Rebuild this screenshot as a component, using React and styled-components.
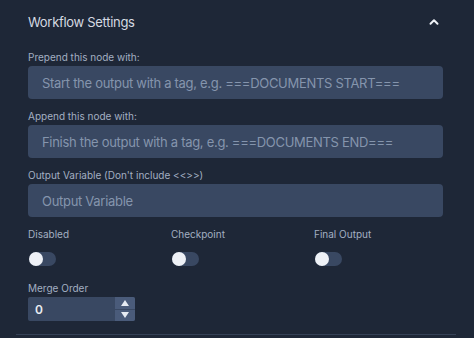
import styled, { createGlobalStyle } from "styled-components";

const GlobalStyle = createGlobalStyle`
  html, body {
    margin: 0;
    padding: 0;
    background: #1e2737;
  }
  * { box-sizing: border-box; }
`;

// 外框
const Panel = styled.div`
  width: 474px;
  height: 338px;
  overflow: hidden;
  background: #1e2737;
  font-family: Inter, "Noto Sans", sans-serif;
  padding: 12px 31px 0 28px;
  position: relative;
`;

const Header = styled.div`
  display: flex;
  align-items: center;
  justify-content: space-between;
  height: 20px;
  margin-bottom: 19px;
`;

const Title = styled.h2`
  margin: 0;
  font-size: 13px;
  font-weight: 400;
  color: #d5dae2;
  letter-spacing: -0.3px;
`;

const Chevron = styled.svg`
  width: 12px;
  height: 12px;
  margin-right: 3px;
`;

const Field = styled.div`
  display: flex;
  flex-direction: column;
  margin-bottom: ${(p) => p.$gap ?? 11}px;
`;

const Label = styled.label`
  font-size: 10px;
  color: #a3afc2;
  line-height: 13px;
  margin-bottom: 2px;
`;

const TextInput = styled.input`
  height: 33px;
  width: 100%;
  border: none;
  outline: none;
  border-radius: 4px;
  background: #394862;
  padding: 0 14px;
  font-family: inherit;
  font-size: 13px;
  letter-spacing: -0.3px;
  color: #dfe4ec;

  &::placeholder {
    color: #8595ad;
  }
`;

const SwitchRow = styled.div`
  display: grid;
  grid-template-columns: repeat(3, 143px);
  margin-bottom: 16px;
`;

const SwitchCell = styled.div`
  display: flex;
  flex-direction: column;
  gap: 11px;
`;

const SwitchLabel = styled.span`
  font-size: 10px;
  color: #a3afc2;
  line-height: 13px;
`;

const Track = styled.div`
  width: 27px;
  height: 14px;
  border-radius: 7px;
  background: ${(p) => (p.$on ? "#5b7bd5" : "#394862")};
  position: relative;
  margin-left: 1px;
`;

const Knob = styled.span`
  position: absolute;
  top: 0;
  left: ${(p) => (p.$on ? 13 : 0)}px;
  width: 14px;
  height: 14px;
  border-radius: 50%;
  background: #eef1f6;
`;

const NumberBox = styled.div`
  display: flex;
  width: 107px;
  height: 24px;
  background: #394862;
  border-radius: 2px;
  overflow: hidden;
`;

const NumberValue = styled.div`
  flex: 1;
  display: flex;
  align-items: center;
  padding-left: 7px;
  font-size: 12px;
  font-weight: 600;
  color: #e8ecf2;
`;

const Spinner = styled.div`
  width: 20px;
  display: flex;
  flex-direction: column;
  background: #4a5b7a;
`;

const SpinBtn = styled.div`
  flex: 1;
  display: flex;
  align-items: center;
  justify-content: center;
  border-top: ${(p) => (p.$down ? "1px solid #394862" : "none")};
`;

const BottomLine = styled.div`
  position: absolute;
  left: 16px;
  right: 18px;
  bottom: 3px;
  height: 1px;
  background: #354156;
`;

const Toggle = ({ label, on }) => (
  <SwitchCell>
    <SwitchLabel>{label}</SwitchLabel>
    <Track $on={on}>
      <Knob $on={on} />
    </Track>
  </SwitchCell>
);

const Tri = ({ down }) => (
  <svg width="8" height="6" viewBox="0 0 8 6">
    <polygon
      points={down ? "0,0 8,0 4,6" : "0,6 8,6 4,0"}
      fill="#e6ebf3"
    />
  </svg>
);

export default function App() {
  return (
    <>
      <GlobalStyle />
      <Panel>
        <Header>
          <Title>Workflow Settings</Title>
          <Chevron viewBox="0 0 12 12">
            <path
              d="M2.5 7.8 L6 4.3 L9.5 7.8"
              fill="none"
              stroke="#eef1f6"
              strokeWidth="2"
              strokeLinecap="round"
              strokeLinejoin="round"
            />
          </Chevron>
        </Header>

        <Field>
          <Label>Prepend this node with:</Label>
          <TextInput placeholder="Start the output with a tag, e.g. ===DOCUMENTS START===" />
        </Field>

        <Field>
          <Label>Append this node with:</Label>
          <TextInput placeholder="Finish the output with a tag, e.g. ===DOCUMENTS END===" />
        </Field>

        <Field>
          <Label>Output Variable (Don't include &lt;&lt;&gt;&gt;)</Label>
          <TextInput placeholder="Output Variable" />
        </Field>

        <SwitchRow>
          <Toggle label="Disabled" />
          <Toggle label="Checkpoint" />
          <Toggle label="Final Output" />
        </SwitchRow>

        <Field>
          <Label>Merge Order</Label>
          <NumberBox>
            <NumberValue>0</NumberValue>
            <Spinner>
              <SpinBtn><Tri /></SpinBtn>
              <SpinBtn $down><Tri down /></SpinBtn>
            </Spinner>
          </NumberBox>
        </Field>

        <BottomLine />
      </Panel>
    </>
  );
}
